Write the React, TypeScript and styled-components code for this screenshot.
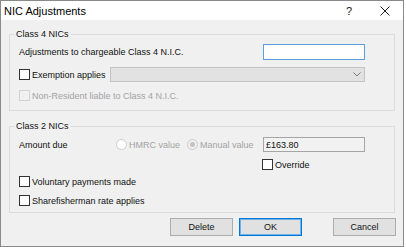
import React from "react";
import styled, { createGlobalStyle } from "styled-components";

const GlobalStyle = createGlobalStyle`
  html, body {
    margin: 0;
    padding: 0;
    background: #ffffff;
  }
  body {
    font-family: "Liberation Sans", Arial, sans-serif;
  }
`;

const Window = styled.div`
  width: 404px;
  height: 247px;
  box-sizing: border-box;
  border: 1px solid #8a8a8a;
  background-color: #f0f0f0;
  display: flex;
  flex-direction: column;
`;

const TitleBar = styled.div`
  height: 19px;
  background-color: #fff;
  display: flex;
  align-items: center;
  padding-left: 3px;
  font-size: 11px;
  color: #000;
`;

const Title = styled.div`
  flex: 1;
`;

const TitleButton = styled.div`
  width: 36px;
  height: 19px;
  display: flex;
  align-items: center;
  justify-content: center;
  font-size: 11px;
  color: #222;
`;

const Body = styled.div`
  flex: 1;
  display: flex;
  flex-direction: column;
  padding: 14px 7px 9px 8px;
  font-size: 9px;
  color: #111;
`;

const Group = styled.div<{ $top: number; $pad: string }>`
  position: relative;
  margin-top: ${(p) => p.$top}px;
  margin-right: 1px;
  padding: ${(p) => p.$pad};
  border: 1px solid #dcdcdc;
  display: flex;
  flex-direction: column;
`;

const Legend = styled.div`
  position: absolute;
  top: -7px;
  left: 4px;
  padding: 0 2px;
  background-color: #f0f0f0;
  font-size: 9px;
  line-height: 12px;
`;

const Row = styled.div<{ $h?: number; $gap?: number; $indent?: number }>`
  display: flex;
  align-items: center;
  height: ${(p) => p.$h ?? 15}px;
  margin-top: ${(p) => p.$gap ?? 0}px;
  padding-left: ${(p) => p.$indent ?? 0}px;
`;

const Label = styled.span<{ $disabled?: boolean; $width?: number }>`
  white-space: nowrap;
  color: ${(p) => (p.$disabled ? "#a3a3a3" : "#111")};
  width: ${(p) => (p.$width ? `${p.$width}px` : "auto")};
`;

const Box = styled.span<{ $disabled?: boolean }>`
  display: inline-block;
  box-sizing: border-box;
  width: 11px;
  height: 11px;
  border: 1px solid ${(p) => (p.$disabled ? "#d2d2d2" : "#333")};
  background-color: ${(p) => (p.$disabled ? "#f0f0f0" : "#fff")};
  margin-right: 2px;
  flex-shrink: 0;
`;

const Radio = styled.span<{ $checked?: boolean }>`
  display: inline-flex;
  align-items: center;
  justify-content: center;
  box-sizing: border-box;
  width: 11px;
  height: 11px;
  border-radius: 50%;
  border: 1px solid #cccccc;
  background-color: ${(p) => (p.$checked ? "#f0f0f0" : "#fff")};
  margin-right: 2px;
  flex-shrink: 0;
  &::after {
    content: "";
    display: ${(p) => (p.$checked ? "block" : "none")};
    width: 5px;
    height: 5px;
    border-radius: 50%;
    background-color: #c4c4c4;
  }
`;

const TextInput = styled.div<{ $focused?: boolean }>`
  box-sizing: border-box;
  width: 102px;
  height: ${(p) => (p.$focused ? 16 : 15)}px;
  margin-left: auto;
  border: 1px solid ${(p) => (p.$focused ? "#5a9fe0" : "#a6a6a6")};
  background-color: ${(p) => (p.$focused ? "#fff" : "#f2f2f2")};
  display: flex;
  align-items: center;
  padding-left: 2px;
  font-size: 9px;
`;

const Combo = styled.div`
  box-sizing: border-box;
  width: 255px;
  height: 15px;
  margin-left: auto;
  border: 1px solid #c3c3c3;
  background-color: #e2e2e2;
  display: flex;
  align-items: center;
  justify-content: flex-end;
  padding-right: 3px;
`;

const RadioItem = styled.div<{ $width?: number }>`
  display: flex;
  align-items: center;
  white-space: nowrap;
  color: #a3a3a3;
  width: ${(p) => (p.$width ? `${p.$width}px` : "auto")};
`;

const Check = styled.div`
  display: flex;
  align-items: center;
`;

const Buttons = styled.div`
  display: flex;
  justify-content: flex-end;
  margin-top: 5px;
`;

const Button = styled.button<{ $default?: boolean; $gap?: number }>`
  box-sizing: border-box;
  width: 63px;
  height: 18px;
  margin-left: ${(p) => p.$gap ?? 0}px;
  padding: 0;
  font-family: inherit;
  font-size: 9px;
  color: #111;
  background-color: #e1e1e1;
  border: 1px solid ${(p) => (p.$default ? "#0078d7" : "#adadad")};
  box-shadow: ${(p) => (p.$default ? "inset 0 0 0 1px #6fb2ea" : "none")};
`;

function Chevron() {
  return (
    <svg width="8" height="5" viewBox="0 0 8 5">
      <path d="M0.5 0.5 L4 4 L7.5 0.5" fill="none" stroke="#7a7a7a" strokeWidth="1" />
    </svg>
  );
}

function CloseIcon() {
  return (
    <svg width="10" height="10" viewBox="0 0 10 10">
      <path d="M0.5 0.5 L9.5 9.5 M9.5 0.5 L0.5 9.5" stroke="#222" strokeWidth="1" />
    </svg>
  );
}

export default function App() {
  return (
    <>
      <GlobalStyle />
      <Window>
        <TitleBar>
          <Title>NIC Adjustments</Title>
          <TitleButton>?</TitleButton>
          <TitleButton>
            <CloseIcon />
          </TitleButton>
        </TitleBar>
        <Body>
          <Group $top={0} $pad="9px 29px 7px 9px">
            <Legend>Class 4 NICs</Legend>
            <Row $h={16}>
              <Label>Adjustments to chargeable Class 4 N.I.C.</Label>
              <TextInput $focused />
            </Row>
            <Row $gap={7}>
              <Check>
                <Box />
                <Label>Exemption applies</Label>
              </Check>
              <Combo>
                <Chevron />
              </Combo>
            </Row>
            <Row $gap={6}>
              <Check>
                <Box $disabled />
                <Label $disabled>Non-Resident liable to Class 4 N.I.C.</Label>
              </Check>
            </Row>
          </Group>
          <Group $top={15} $pad="10px 29px 4px 9px">
            <Legend>Class 2 NICs</Legend>
            <Row>
              <Label $width={97}>Amount due</Label>
              <RadioItem $width={71}>
                <Radio />
                HMRC value
              </RadioItem>
              <RadioItem>
                <Radio $checked />
                Manual value
              </RadioItem>
              <TextInput>£163.80</TextInput>
            </Row>
            <Row $gap={5} $indent={243}>
              <Check>
                <Box />
                <Label>Override</Label>
              </Check>
            </Row>
            <Row $gap={2}>
              <Check>
                <Box />
                <Label>Voluntary payments made</Label>
              </Check>
            </Row>
            <Row $gap={4}>
              <Check>
                <Box />
                <Label>Sharefisherman rate applies</Label>
              </Check>
            </Row>
          </Group>
          <Buttons>
            <Button>Delete</Button>
            <Button $default $gap={6}>
              OK
            </Button>
            <Button $gap={31}>Cancel</Button>
          </Buttons>
        </Body>
      </Window>
    </>
  );
}
